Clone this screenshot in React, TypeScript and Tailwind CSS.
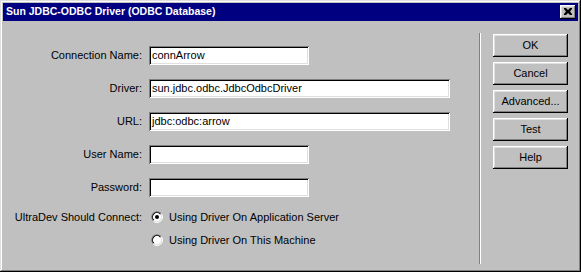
import React from 'react';

const raised =
  'shadow-[inset_-1px_-1px_0_#000,inset_1px_1px_0_#fff,inset_-2px_-2px_0_#808080,inset_2px_2px_0_#dfdfdf]';
const sunken =
  'shadow-[inset_1px_1px_0_#808080,inset_-1px_-1px_0_#fff,inset_2px_2px_0_#000,inset_-2px_-2px_0_#dfdfdf]';

interface FieldProps {
  label: string;
  value?: string;
  wide?: boolean;
}

function Field({ label, value = '', wide = false }: FieldProps) {
  return (
    <div className="flex items-center h-[19px]">
      <span className="w-[140px] shrink-0 text-right pr-[1px]">{label}</span>
      <div
        className={`ml-[6px] h-[19px] bg-white ${sunken} flex items-center pl-[3px] ${
          wide ? 'w-[301px]' : 'w-[160px]'
        }`}
      >
        {value}
      </div>
    </div>
  );
}

function Radio({ checked, label }: { checked?: boolean; label: string }) {
  const c = 2 * Math.PI * 5.5;
  const ci = 2 * Math.PI * 4.5;
  return (
    <div className="flex items-center h-[14px]">
      <svg width="12" height="12" viewBox="0 0 12 12" className="shrink-0">
        <circle cx="6" cy="6" r="5" fill="#fff" />
        <circle cx="6" cy="6" r="5.5" fill="none" stroke="#fff" strokeWidth="1" />
        <circle
          cx="6" cy="6" r="5.5" fill="none" stroke="#808080" strokeWidth="1"
          strokeDasharray={`${c / 2} ${c / 2}`} transform="rotate(135 6 6)"
        />
        <circle cx="6" cy="6" r="4.5" fill="none" stroke="#dfdfdf" strokeWidth="1" />
        <circle
          cx="6" cy="6" r="4.5" fill="none" stroke="#000" strokeWidth="1"
          strokeDasharray={`${ci / 2} ${ci / 2}`} transform="rotate(135 6 6)"
        />
        {checked && <circle cx="6" cy="6" r="2" fill="#000" />}
      </svg>
      <span className="ml-[6px]">{label}</span>
    </div>
  );
}

function Button({ children }: { children: React.ReactNode }) {
  return (
    <div className={`w-[75px] h-[23px] flex items-center justify-center bg-[#c0c0c0] ${raised}`}>
      {children}
    </div>
  );
}

export default function App() {
  return (
    <div
      className="w-[581px] h-[272px] bg-[#c0c0c0] p-[3px] flex flex-col text-[11px] text-black shadow-[inset_-1px_-1px_0_#000,inset_1px_1px_0_#dfdfdf,inset_-2px_-2px_0_#808080,inset_2px_2px_0_#fff]"
      style={{ fontFamily: '"Liberation Sans", Arial, sans-serif' }}
    >
      <div className="h-[18px] bg-[#000080] flex items-center justify-between pl-[3px] pr-[2px]">
        <span className="text-white font-bold text-[10.5px]">
          Sun JDBC-ODBC Driver (ODBC Database)
        </span>
        <div className={`w-[16px] h-[14px] bg-[#c0c0c0] ${raised} flex items-center justify-center`}>
          <svg width="8" height="7" viewBox="0 0 8 7" className="mb-[1px]">
            <path d="M0 0h2l2 2 2-2h2v1L6 3.5 8 6v1H6L4 5 2 7H0V6l2-2.5L0 1z" fill="#000" />
          </svg>
        </div>
      </div>

      <div className="flex flex-1 pt-[12px]">
        <div className="w-[476px] flex flex-col pt-[13px]">
          <div className="flex flex-col gap-[14px]">
            <Field label="Connection Name:" value="connArrow" />
            <Field label="Driver:" value="sun.jdbc.odbc.JdbcOdbcDriver" wide />
            <Field label="URL:" value="jdbc:odbc:arrow" wide />
            <Field label="User Name:" />
            <Field label="Password:" />
          </div>
          <div className="flex mt-[13px]">
            <span className="w-[140px] shrink-0 text-right pr-[1px] h-[14px] leading-[14px]">
              UltraDev Should Connect:
            </span>
            <div className="ml-[8px] flex flex-col gap-[9px]">
              <Radio checked label="Using Driver On Application Server" />
              <Radio label="Using Driver On This Machine" />
            </div>
          </div>
        </div>

        <div className="w-[2px] h-[231px] border-l border-[#808080] border-r border-r-white" />

        <div className="ml-[12px] mt-[1px] flex flex-col gap-[5px]">
          <Button>OK</Button>
          <Button>Cancel</Button>
          <Button>Advanced...</Button>
          <Button>Test</Button>
          <Button>Help</Button>
        </div>
      </div>
    </div>
  );
}
